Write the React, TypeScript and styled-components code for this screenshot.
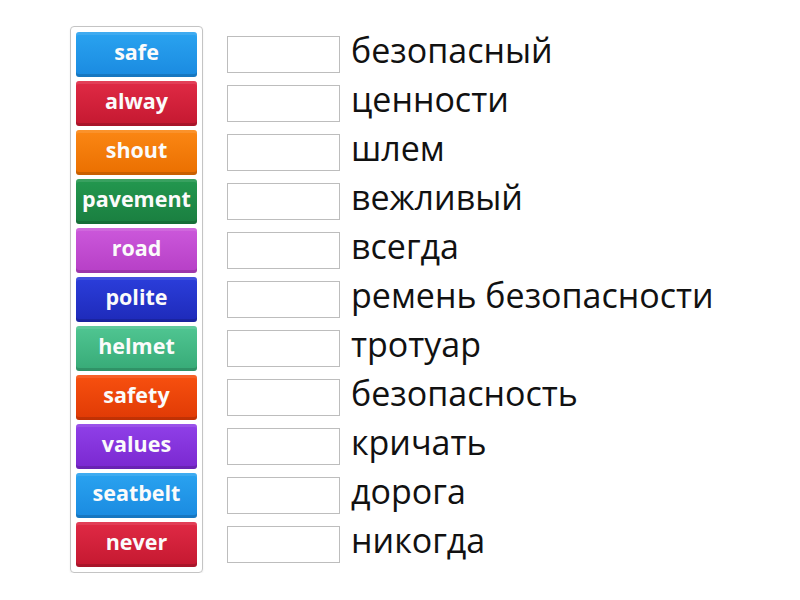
import React from "react";
import styled, { createGlobalStyle } from "styled-components";

const GlobalStyle = createGlobalStyle`
  html, body { margin: 0; padding: 0; background: #ffffff; }
  body { font-family: "Open Sans", "Noto Sans", sans-serif; }
`;

const Page = styled.div`
  display: flex;
  align-items: flex-start;
  padding: 26px 0 0 70px;
  gap: 24px;
`;

const Panel = styled.div`
  display: flex;
  flex-direction: column;
  gap: 4px;
  padding: 5px;
  border: 1px solid #c4c4c4;
  border-radius: 4px;
  box-shadow: 0 1px 2px rgba(0, 0, 0, 0.08);
`;

const Tile = styled.div<{ $top: string; $bottom: string }>`
  box-sizing: border-box;
  width: 121px;
  height: 45px;
  display: flex;
  align-items: center;
  justify-content: center;
  border-radius: 3px;
  background: linear-gradient(${(p) => p.$top}, ${(p) => p.$bottom});
  box-shadow: inset 0 -3px 0 rgba(0, 0, 0, 0.14), inset 0 3px 0 rgba(255, 255, 255, 0.1);
  color: #fbfbfb;
  font-family: "Open Sans", "Noto Sans", sans-serif;
  font-weight: 700;
  font-size: 21.5px;
  line-height: 1;
  padding-bottom: 5px;
`;

const Rows = styled.div`
  display: flex;
  flex-direction: column;
  gap: 4px;
  padding-top: 6px;
`;

const Row = styled.div`
  height: 45px;
  display: flex;
  align-items: center;
  gap: 11px;
`;

const Box = styled.div`
  box-sizing: border-box;
  width: 113px;
  height: 37px;
  border: 1px solid #bdbdbd;
  background: #ffffff;
`;

const Label = styled.span`
  font-family: "Open Sans", "Noto Sans", sans-serif;
  font-size: 34px;
  color: #111111;
  line-height: 1;
  padding-bottom: 9px;
  white-space: nowrap;
`;

const tiles: { text: string; top: string; bottom: string }[] = [
  { text: "safe", top: "#2aa3f0", bottom: "#1a8ae0" },
  { text: "alway", top: "#e02a45", bottom: "#c41830" },
  { text: "shout", top: "#fb8714", bottom: "#ea6f00" },
  { text: "pavement", top: "#23984f", bottom: "#1a7e40" },
  { text: "road", top: "#cc58db", bottom: "#b63fc6" },
  { text: "polite", top: "#2b3edb", bottom: "#1e2ab9" },
  { text: "helmet", top: "#50c692", bottom: "#37aa77" },
  { text: "safety", top: "#f7500f", bottom: "#e03a05" },
  { text: "values", top: "#9040e8", bottom: "#7a28d0" },
  { text: "seatbelt", top: "#2aa3f0", bottom: "#1a8ae0" },
  { text: "never", top: "#e02a45", bottom: "#c41830" },
];

const words = [
  "безопасный",
  "ценности",
  "шлем",
  "вежливый",
  "всегда",
  "ремень безопасности",
  "тротуар",
  "безопасность",
  "кричать",
  "дорога",
  "никогда",
];

export default function App() {
  return (
    <>
      <GlobalStyle />
      <Page>
        <Panel>
          {tiles.map((t) => (
            <Tile key={t.text} $top={t.top} $bottom={t.bottom}>
              {t.text}
            </Tile>
          ))}
        </Panel>
        <Rows>
          {words.map((w) => (
            <Row key={w}>
              <Box />
              <Label>{w}</Label>
            </Row>
          ))}
        </Rows>
      </Page>
    </>
  );
}
